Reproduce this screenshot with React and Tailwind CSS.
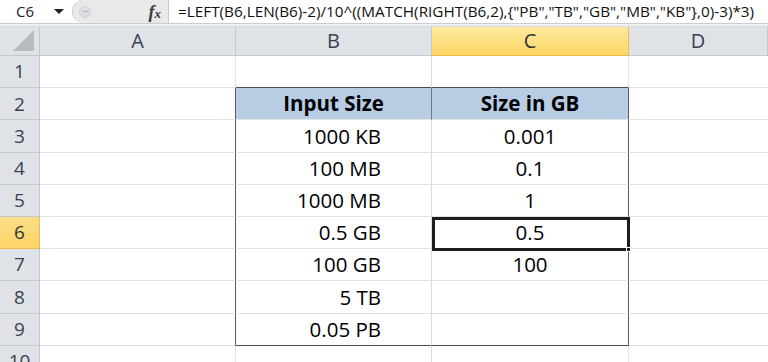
import React from 'react';

const rows = [
  { n: 1, b: '', c: '' },
  { n: 2, b: 'Input Size', c: 'Size in GB', head: true },
  { n: 3, b: '1000 KB', c: '0.001' },
  { n: 4, b: '100 MB', c: '0.1' },
  { n: 5, b: '1000 MB', c: '1' },
  { n: 6, b: '0.5 GB', c: '0.5' },
  { n: 7, b: '100 GB', c: '100' },
  { n: 8, b: '5 TB', c: '' },
  { n: 9, b: '0.05 PB', c: '' },
  { n: 10, b: '', c: '' },
];

const formula = '=LEFT(B6,LEN(B6)-2)/10^((MATCH(RIGHT(B6,2),{"PB","TB","GB","MB","KB"},0)-3)*3)';

function ColHeader({ label, active }) {
  return (
    <div
      className={
        'flex items-center justify-center h-full text-[20px] border-r border-b ' +
        (active
          ? 'bg-gradient-to-b from-[#fee9a0] to-[#fcd762] border-[#f0bb4c] text-[#333]'
          : 'bg-[#dfe3e8] border-[#c4c8cd] text-[#3a414c]')
      }
    >
      {label}
    </div>
  );
}

export default function App() {
  return (
    <div className="w-[768px] h-[362px] overflow-hidden bg-white font-['Open_Sans',sans-serif] text-black relative">
      {/* Formula Bar */}
      <div className="flex h-[24px] bg-white border-b border-[#c9ccd0]">
        <div className="w-[72px] flex items-center pl-[16px] text-[15px] text-[#222]">
          <span>C6</span>
          <span className="ml-auto mr-[8px] w-0 h-0 border-l-[5px] border-r-[5px] border-t-[5px] border-l-transparent border-r-transparent border-t-[#222]"></span>
        </div>
        <div className="w-[96px] flex items-center bg-[#e8e9eb] rounded-l-[12px] border-l border-[#c9ccd0] pl-[6px] pr-[7px]">
          <span className="w-[12px] h-[12px] rounded-full bg-[#dcdde0] border border-[#d2d3d6] flex items-center justify-center">
            <span className="w-[5px] h-[1px] bg-[#b0b2b5]"></span>
          </span>
          <span className="ml-auto font-['Liberation_Serif',serif] italic font-bold text-[18px] text-[#3a3a3a] leading-none">
            f<span className="text-[13px]">x</span>
          </span>
        </div>
        <div className="flex-1 flex items-center border-l border-[#c9ccd0] pl-[9px] text-[15.3px] text-[#111] whitespace-nowrap overflow-hidden">
          {formula}
        </div>
      </div>
      <div className="h-[3px] bg-[#eef0f2] border-b border-[#d5d8dc]"></div>

      {/* Column headers */}
      <div className="flex h-[29px]">
        <div className="w-[40px] h-full bg-[#dfe3e8] border-r border-b border-[#c4c8cd] flex items-end justify-end pr-[5px] pb-[4px]">
          <svg width="21" height="21" viewBox="0 0 21 21">
            <polygon points="21,0 21,21 0,21" fill="#b7bbc0" />
          </svg>
        </div>
        <div className="w-[196px]"><ColHeader label="A" /></div>
        <div className="w-[196px]"><ColHeader label="B" /></div>
        <div className="w-[197px]"><ColHeader label="C" active /></div>
        <div className="flex-1"><ColHeader label="D" /></div>
      </div>

      {/* Rows */}
      {rows.map((r) => {
        const inTable = r.n >= 2 && r.n <= 9;
        const active = r.n === 6;
        return (
          <div key={r.n} className="flex h-[32.2px]">
            <div
              className={
                'w-[40px] flex items-center justify-center text-[19px] border-r border-b ' +
                (active
                  ? 'bg-gradient-to-b from-[#fddf86] to-[#fbd468] border-[#f0bb4c] text-[#333]'
                  : 'bg-[#dfe3e8] border-[#c4c8cd] text-[#3a414c]')
              }
            >
              {r.n}
            </div>
            <div
              className={
                'w-[196px] border-b border-[#e3e3e3] border-r ' +
                (inTable ? 'border-r-[#5a5a5a]' : 'border-r-[#e3e3e3]')
              }
            ></div>
            <div
              className={
                'w-[196px] flex items-center text-[20.5px] border-r border-b ' +
                (r.head
                  ? 'bg-[#b8cce4] justify-center font-bold border-r-[#6a7a8a] border-b-[#e3e3e3] '
                  : 'justify-end pr-[50px] border-r-[#dadada] ') +
                (r.n === 1 || r.n === 9 ? 'border-b-[#4a4a4a] ' : !r.head ? 'border-b-[#e3e3e3] ' : '')
              }
            >
              {r.b}
            </div>
            <div
              className={
                'w-[197px] flex items-center justify-center text-[20.5px] border-r border-b ' +
                (r.head ? 'bg-[#b8cce4] font-bold ' : '') +
                (inTable ? 'border-r-[#5a5a5a] ' : 'border-r-[#e3e3e3] ') +
                (r.n === 1 || r.n === 9 ? 'border-b-[#4a4a4a]' : 'border-b-[#e3e3e3]')
              }
            >
              {r.c}
            </div>
            <div className="flex-1 border-b border-[#e3e3e3]"></div>
          </div>
        );
      })}

      {/* Active cell C6 selection */}
      <div className="absolute left-[432px] top-[217px] w-[198px] h-[34px] border-[3px] border-[#1c1c1c] pointer-events-none">
        <div className="absolute -right-[4px] -bottom-[4px] w-[5px] h-[5px] bg-[#1c1c1c] border border-white"></div>
      </div>
    </div>
  );
}
